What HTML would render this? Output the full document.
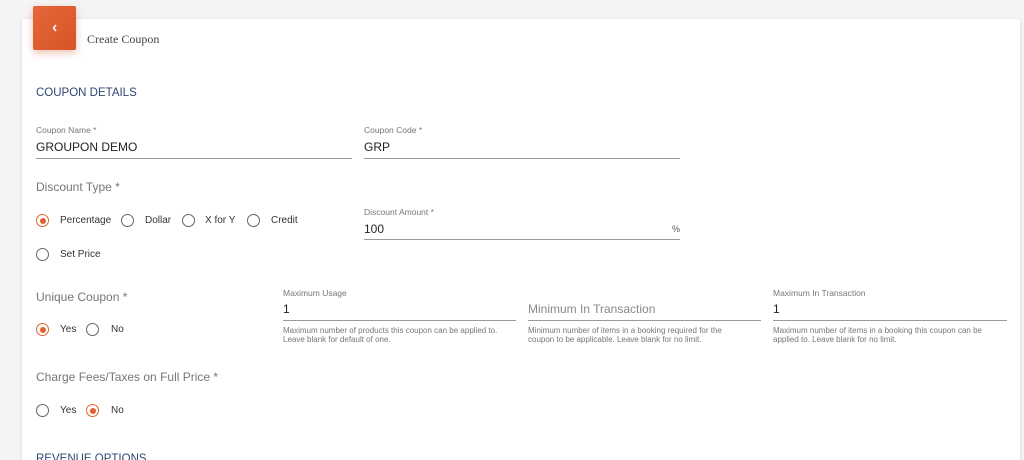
<!DOCTYPE html><html><head><style>
html,body{margin:0;width:1024px;height:460px;overflow:hidden}
body{background:#f4f4f4;font-family:"Liberation Sans",sans-serif;position:relative}
.card{position:absolute;left:22px;top:19px;width:998px;height:460px;background:#fff;box-shadow:0 1px 4px rgba(0,0,0,.12);border-radius:3px}
.a{position:absolute;white-space:nowrap}
.lbl{font-size:8.5px;color:#777}
.val{font-size:12px;color:#222}
.ul{position:absolute;height:1px;background:#9a9a9a}
.sec{font-size:11.5px;color:#2f4674}
.q{font-size:12px;color:#777}
.r{position:absolute;width:11px;height:11px;border:1.5px solid #666;border-radius:50%;box-sizing:content-box}
.r.on{border-color:#e0622f}
.r.on:after{content:"";position:absolute;left:2.5px;top:2.5px;width:6px;height:6px;border-radius:50%;background:#e0622f}
.rt{font-size:10px;color:#333}
.h{font-size:8px;color:#777;line-height:9px}
</style></head><body>
<div class="card"></div>
<div class="a" style="left:33px;top:6px;width:43px;height:44px;background:linear-gradient(135deg,#e4673a,#d85428);border-radius:2px;box-shadow:0 3px 8px rgba(200,80,40,.35)"><svg width="43" height="44"><path d="M23 19 L20.5 22 L23 25" stroke="#fff" stroke-width="1.5" fill="none"/></svg></div>
<div class="a" style="left:87px;top:32px;font-family:'Liberation Serif',serif;font-size:12px;color:#444">Create Coupon</div>
<div class="a sec" style="left:36px;top:87px">COUPON DETAILS</div>
<div class="a lbl" style="left:36px;top:125px">Coupon Name *</div>
<div class="a val" style="left:36px;top:140px">GROUPON DEMO</div>
<div class="ul" style="left:36px;top:158px;width:316px"></div>
<div class="a lbl" style="left:364px;top:125px">Coupon Code *</div>
<div class="a val" style="left:364px;top:140px">GRP</div>
<div class="ul" style="left:364px;top:158px;width:316px"></div>
<div class="a q" style="left:36px;top:180px">Discount Type *</div>
<div class="r on" style="left:36px;top:214px"></div><div class="a rt" style="left:60px;top:215px">Percentage</div>
<div class="r" style="left:121px;top:214px"></div><div class="a rt" style="left:145px;top:215px">Dollar</div>
<div class="r" style="left:182px;top:214px"></div><div class="a rt" style="left:205px;top:215px">X for Y</div>
<div class="r" style="left:247px;top:214px"></div><div class="a rt" style="left:271px;top:215px">Credit</div>
<div class="r" style="left:36px;top:248px"></div><div class="a rt" style="left:60px;top:249px">Set Price</div>
<div class="a lbl" style="left:364px;top:207px">Discount Amount *</div>
<div class="a val" style="left:364px;top:222px">100</div>
<div class="a" style="left:672px;top:224px;font-size:9px;color:#555">%</div>
<div class="ul" style="left:364px;top:239px;width:316px"></div>
<div class="a q" style="left:36px;top:290px">Unique Coupon *</div>
<div class="r on" style="left:36px;top:323px"></div><div class="a rt" style="left:60px;top:324px">Yes</div>
<div class="r" style="left:86px;top:323px"></div><div class="a rt" style="left:111px;top:324px">No</div>
<div class="a lbl" style="left:283px;top:288px">Maximum Usage</div>
<div class="a val" style="left:283px;top:302px">1</div>
<div class="ul" style="left:283px;top:320px;width:233px"></div>
<div class="a h" style="left:283px;top:326px">Maximum number of products this coupon can be applied to.<br>Leave blank for default of one.</div>
<div class="a q" style="left:528px;top:302px;color:#888">Minimum In Transaction</div>
<div class="ul" style="left:528px;top:320px;width:233px"></div>
<div class="a h" style="left:528px;top:326px">Minimum number of items in a booking required for the<br>coupon to be applicable. Leave blank for no limit.</div>
<div class="a lbl" style="left:773px;top:288px">Maximum In Transaction</div>
<div class="a val" style="left:773px;top:302px">1</div>
<div class="ul" style="left:773px;top:320px;width:234px"></div>
<div class="a h" style="left:773px;top:326px">Maximum number of items in a booking this coupon can be<br>applied to. Leave blank for no limit.</div>
<div class="a q" style="left:36px;top:370px">Charge Fees/Taxes on Full Price *</div>
<div class="r" style="left:36px;top:404px"></div><div class="a rt" style="left:60px;top:405px">Yes</div>
<div class="r on" style="left:86px;top:404px"></div><div class="a rt" style="left:111px;top:405px">No</div>
<div class="a sec" style="left:36px;top:453px">REVENUE OPTIONS</div>
</body></html>
